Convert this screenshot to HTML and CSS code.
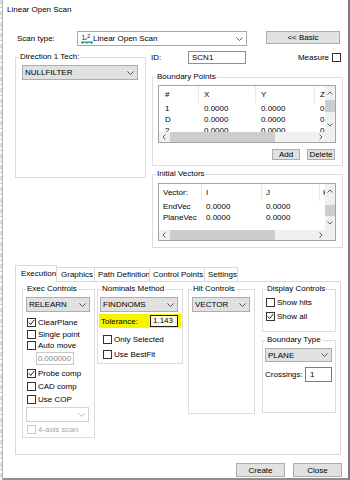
FILE: index.html
```html
<!DOCTYPE html>
<html>
<head>
<meta charset="utf-8">
<title>Linear Open Scan</title>
<link rel="stylesheet" href="styles.css">
</head>
<body>
<div class="window">
  <div class="strip"></div>
  <div class="dialog">
    <div class="title">Linear Open Scan</div>

    <div class="scan-row">
      <span class="lbl-scan">Scan type:</span>
      <div class="combo combo-edit">
        <svg class="scan-icon" width="12" height="13" viewBox="0 0 12 13">
          <text x="0.5" y="8" font-size="7" font-family="Liberation Sans, sans-serif" fill="#222">1</text>
          <text x="6" y="6" font-size="6" font-family="Liberation Sans, sans-serif" fill="#222">2</text>
          <rect x="4.5" y="6.5" width="1.2" height="1.2" fill="#222"/>
          <rect x="0" y="9.5" width="12" height="1.5" fill="#2a9d8f"/>
          <rect x="1" y="11" width="1" height="1" fill="#2a9d8f"/>
          <rect x="5.5" y="11" width="1" height="1" fill="#2a9d8f"/>
          <rect x="10" y="11" width="1" height="1" fill="#2a9d8f"/>
        </svg>
        <span class="combo-text">Linear Open Scan</span>
        <svg class="chev" width="7" height="4" viewBox="0 0 7 4"><polyline points="0.5,0.5 3.5,3.5 6.5,0.5" fill="none" stroke="#555" stroke-width="1"/></svg>
      </div>
      <div class="btn btn-basic">&lt;&lt; Basic</div>
    </div>

    <div class="main">
      <div class="left-col">
        <fieldset class="group g-dir">
          <legend>Direction 1 Tech:</legend>
          <div class="g-dir-body">
            <div class="combo combo-dir">
              <span class="combo-text">NULLFILTER</span>
              <svg class="chev" width="7" height="4" viewBox="0 0 7 4"><polyline points="0.5,0.5 3.5,3.5 6.5,0.5" fill="none" stroke="#555" stroke-width="1"/></svg>
            </div>
          </div>
        </fieldset>
      </div>

      <div class="right-col">
        <div class="id-row">
          <span class="lbl-id">ID:</span>
          <div class="input input-id">SCN1</div>
          <span class="measure">Measure</span>
          <span class="cb cb-measure"></span>
        </div>

        <fieldset class="group g-bp">
          <legend>Boundary Points</legend>
          <div class="g-bp-body">
            <div class="list">
              <div class="list-body">
                <div class="list-main">
                  <div class="lrow lhead">
                    <span class="c bc1">#</span><span class="c bc2">X</span><span class="c bc3">Y</span><span class="c bc4">Z</span>
                  </div>
                  <div class="lrow">
                    <span class="c bc1">1</span><span class="c bc2">0.0000</span><span class="c bc3">0.0000</span><span class="c bc4">0</span>
                  </div>
                  <div class="lrow">
                    <span class="c bc1">D</span><span class="c bc2">0.0000</span><span class="c bc3">0.0000</span><span class="c bc4">0</span>
                  </div>
                  <div class="lrow">
                    <span class="c bc1">2</span><span class="c bc2">0.0000</span><span class="c bc3">0.0000</span><span class="c bc4">0</span>
                  </div>
                </div>
                <div class="vscroll">
                  <div class="sbtn sbtn-v"><svg width="6" height="4" viewBox="0 0 6 4"><polyline points="0.5,3.5 3,1 5.5,3.5" fill="none" stroke="#606060"/></svg></div>
                  <div class="vtrack"><div class="vthumb vthumb-bp"></div></div>
                  <div class="sbtn sbtn-v"><svg width="6" height="4" viewBox="0 0 6 4"><polyline points="0.5,0.5 3,3 5.5,0.5" fill="none" stroke="#606060"/></svg></div>
                </div>
              </div>
              <div class="hscroll">
                <div class="sbtn sbtn-h"><svg width="4" height="6" viewBox="0 0 4 6"><polyline points="3.5,0.5 1,3 3.5,5.5" fill="none" stroke="#606060"/></svg></div>
                <div class="htrack"><div class="hthumb"></div></div>
                <div class="sbtn sbtn-h"><svg width="4" height="6" viewBox="0 0 4 6"><polyline points="0.5,0.5 3,3 0.5,5.5" fill="none" stroke="#606060"/></svg></div>
                <div class="corner"></div>
              </div>
            </div>
            <div class="bp-buttons">
              <div class="btn btn-small">Add</div>
              <div class="btn btn-small">Delete</div>
            </div>
          </div>
        </fieldset>

        <fieldset class="group g-iv">
          <legend>Initial Vectors</legend>
          <div class="g-iv-body">
            <div class="list">
              <div class="list-body">
                <div class="list-main">
                  <div class="lrow lhead">
                    <span class="c vc1">Vector:</span><span class="c vc2">I</span><span class="c vc3">J</span><span class="c vc4">K</span>
                  </div>
                  <div class="lrow">
                    <span class="c vc1">EndVec</span><span class="c vc2">0.0000</span><span class="c vc3">0.0000</span>
                  </div>
                  <div class="lrow">
                    <span class="c vc1">PlaneVec</span><span class="c vc2">0.0000</span><span class="c vc3">0.0000</span>
                  </div>
                </div>
                <div class="vscroll">
                  <div class="sbtn sbtn-v"><svg width="6" height="4" viewBox="0 0 6 4"><polyline points="0.5,3.5 3,1 5.5,3.5" fill="none" stroke="#606060"/></svg></div>
                  <div class="vtrack"><div class="vthumb vthumb-iv"></div></div>
                  <div class="sbtn sbtn-v"><svg width="6" height="4" viewBox="0 0 6 4"><polyline points="0.5,0.5 3,3 5.5,0.5" fill="none" stroke="#606060"/></svg></div>
                </div>
              </div>
              <div class="hscroll">
                <div class="sbtn sbtn-h"><svg width="4" height="6" viewBox="0 0 4 6"><polyline points="3.5,0.5 1,3 3.5,5.5" fill="none" stroke="#606060"/></svg></div>
                <div class="htrack"><div class="hthumb"></div></div>
                <div class="sbtn sbtn-h"><svg width="4" height="6" viewBox="0 0 4 6"><polyline points="0.5,0.5 3,3 0.5,5.5" fill="none" stroke="#606060"/></svg></div>
                <div class="corner"></div>
              </div>
            </div>
          </div>
        </fieldset>
      </div>
    </div>

    <div class="tabs">
      <div class="tabstrip">
        <div class="tab active t1">Execution</div>
        <div class="tab t2">Graphics</div>
        <div class="tab t3">Path Definition</div>
        <div class="tab t4">Control Points</div>
        <div class="tab t5">Settings</div>
      </div>
      <div class="pane">
        <fieldset class="group g-exec">
          <legend>Exec Controls</legend>
          <div class="g-exec-body">
            <div class="combo combo-exec">
              <span class="combo-text">RELEARN</span>
              <svg class="chev" width="7" height="4" viewBox="0 0 7 4"><polyline points="0.5,0.5 3.5,3.5 6.5,0.5" fill="none" stroke="#555" stroke-width="1"/></svg>
            </div>
            <div class="chk-row mt5"><span class="cb"><svg width="7" height="7" viewBox="0 0 7 7"><polyline points="0.8,3.4 2.7,5.5 6.2,1" fill="none" stroke="#222" stroke-width="1"/></svg></span><span>ClearPlane</span></div>
            <div class="chk-row mt1"><span class="cb"></span><span>Single point</span></div>
            <div class="chk-row"><span class="cb"></span><span>Auto move</span></div>
            <div class="input input-move">0.000000</div>
            <div class="chk-row mt3"><span class="cb"><svg width="7" height="7" viewBox="0 0 7 7"><polyline points="0.8,3.4 2.7,5.5 6.2,1" fill="none" stroke="#222" stroke-width="1"/></svg></span><span>Probe comp</span></div>
            <div class="chk-row mt2"><span class="cb"></span><span>CAD comp</span></div>
            <div class="chk-row mt2"><span class="cb"></span><span>Use COP</span></div>
            <div class="combo combo-dis mt2">
              <span class="combo-text"></span>
              <svg class="chev" width="7" height="4" viewBox="0 0 7 4"><polyline points="0.5,0.5 3.5,3.5 6.5,0.5" fill="none" stroke="#b8b8b8" stroke-width="1"/></svg>
            </div>
            <div class="chk-row mt2 dis"><span class="cb cb-dis"></span><span>4-axis scan</span></div>
          </div>
        </fieldset>

        <fieldset class="group g-nom">
          <legend>Nominals Method</legend>
          <div class="g-nom-body">
            <div class="combo combo-nom">
              <span class="combo-text">FINDNOMS</span>
              <svg class="chev" width="7" height="4" viewBox="0 0 7 4"><polyline points="0.5,0.5 3.5,3.5 6.5,0.5" fill="none" stroke="#555" stroke-width="1"/></svg>
            </div>
            <div class="tol-row">
              <span class="tol-label">Tolerance:</span>
              <div class="input input-tol">1.143</div>
            </div>
            <div class="chk-row nom-chk mt6"><span class="cb"></span><span>Only Selected</span></div>
            <div class="chk-row nom-chk mt4"><span class="cb"></span><span>Use BestFit</span></div>
          </div>
        </fieldset>

        <fieldset class="group g-hit">
          <legend>Hit Controls</legend>
          <div class="g-hit-body">
            <div class="combo combo-hit">
              <span class="combo-text">VECTOR</span>
              <svg class="chev" width="7" height="4" viewBox="0 0 7 4"><polyline points="0.5,0.5 3.5,3.5 6.5,0.5" fill="none" stroke="#555" stroke-width="1"/></svg>
            </div>
          </div>
        </fieldset>

        <div class="pane-right">
          <fieldset class="group g-disp">
            <legend>Display Controls</legend>
            <div class="g-disp-body">
              <div class="chk-row mt3"><span class="cb"></span><span>Show hits</span></div>
              <div class="chk-row mt3"><span class="cb"><svg width="7" height="7" viewBox="0 0 7 7"><polyline points="0.8,3.4 2.7,5.5 6.2,1" fill="none" stroke="#222" stroke-width="1"/></svg></span><span>Show all</span></div>
            </div>
          </fieldset>
          <fieldset class="group g-bt">
            <legend>Boundary Type</legend>
            <div class="g-bt-body">
              <div class="combo combo-bt">
                <span class="combo-text">PLANE</span>
                <svg class="chev" width="7" height="4" viewBox="0 0 7 4"><polyline points="0.5,0.5 3.5,3.5 6.5,0.5" fill="none" stroke="#555" stroke-width="1"/></svg>
              </div>
              <div class="cross-row">
                <span class="cross-label">Crossings:</span>
                <div class="input input-cross">1</div>
              </div>
            </div>
          </fieldset>
        </div>
      </div>
    </div>

    <div class="footer">
      <div class="btn btn-foot">Create</div>
      <div class="btn btn-foot">Close</div>
    </div>
  </div>
</div>
</body>
</html>
```

FILE: styles.css
```css
* { box-sizing: border-box; }

html, body {
  margin: 0;
  padding: 0;
  background: #ffffff;
}

body {
  font-family: "Liberation Sans", Arial, sans-serif;
  font-size: 8px;
  color: #000000;
  width: 350px;
  height: 480px;
  overflow: hidden;
}

.window {
  display: flex;
  width: 350px;
  height: 480px;
}

.strip {
  width: 3px;
  flex: none;
  border-right: 1px solid #b4b4b4;
  background: repeating-linear-gradient(to bottom, #d5dcea 0 3px, #eec8c8 3px 4px, #f4f4f4 4px 7px, #c4cde0 7px 8px, #ffffff 8px 11px);
}

.dialog {
  width: 347px;
  height: 480px;
  flex: none;
  border-right: 2px solid #7b7b7b;
  border-bottom: 2px solid #8e8e8e;
  background: #ffffff;
}

.title {
  height: 20px;
  line-height: 20px;
  padding-left: 4px;
  font-size: 8px;
}

/* ---------- scan type row ---------- */
.scan-row {
  display: flex;
  align-items: flex-start;
  margin-top: 11px;
  height: 15px;
  padding-left: 14px;
}

.lbl-scan {
  width: 60px;
  line-height: 15px;
  flex: none;
}

.combo {
  display: flex;
  align-items: center;
  height: 15px;
  background: #e1e1e1;
  border: 1px solid #adadad;
  padding-left: 2px;
  flex: none;
}

.combo-text {
  flex: 1;
  white-space: nowrap;
  overflow: hidden;
}

.chev {
  flex: none;
  margin-right: 3px;
}

.combo-edit {
  width: 170px;
  background: #ffffff;
  border-color: #a8a8a8;
  padding-left: 3px;
}

.scan-icon {
  flex: none;
  margin-right: 0;
}

.btn {
  display: flex;
  align-items: center;
  justify-content: center;
  background: #e1e1e1;
  border: 1px solid #adadad;
  flex: none;
  white-space: nowrap;
}

.btn-basic {
  margin-left: 19px;
  width: 74px;
  height: 13px;
}

/* ---------- main area ---------- */
.main {
  display: flex;
  align-items: flex-start;
  margin-top: 5px;
  padding-left: 12px;
}

.left-col {
  width: 131px;
  flex: none;
}

.right-col {
  width: 192px;
  flex: none;
  margin-left: 5px;
}

.group {
  margin: 0;
  padding: 0;
  border: 1px solid #dcdcdc;
  min-inline-size: 0;
}

.group legend {
  margin-left: 3px;
  padding: 0 1px;
  height: 10px;
  line-height: 10px;
  font-size: 8px;
  white-space: nowrap;
}

.g-dir {
  width: 131px;
  margin-top: 1px;
}

.g-dir-body {
  height: 115px;
  padding: 3px 0 0 6px;
}

.combo-dir {
  width: 116px;
}

.id-row {
  display: flex;
  align-items: center;
  height: 13px;
}

.lbl-id {
  width: 37px;
  flex: none;
}

.input {
  background: #ffffff;
  border: 1px solid #8f8f8f;
  flex: none;
  white-space: nowrap;
  overflow: hidden;
}

.input-id {
  width: 58px;
  height: 13px;
  line-height: 11px;
  padding-left: 3px;
}

.measure {
  margin-left: auto;
}

.cb {
  width: 9px;
  height: 9px;
  border: 1px solid #333333;
  background: #ffffff;
  display: inline-flex;
  flex: none;
}

.cb-measure {
  margin-left: 3px;
  margin-right: 2px;
}

.g-bp {
  width: 191px;
  margin-top: 8px;
  margin-left: 1px;
}

.g-bp-body {
  padding: 3px 0 5px 5px;
}

.g-iv {
  width: 191px;
  margin-top: 3px;
  margin-left: 1px;
}

.g-iv-body {
  padding: 4px 0 6px 5px;
}

/* ---------- list views ---------- */
.list {
  width: 178px;
  height: 58px;
  border: 1px solid #a3a3a3;
  background: #ffffff;
  display: flex;
  flex-direction: column;
}

.list-body {
  display: flex;
  height: 46px;
}

.list-main {
  flex: 1;
  overflow: hidden;
}

.lrow {
  display: flex;
  height: 11px;
  line-height: 11px;
  white-space: nowrap;
}

.lrow.lhead {
  height: 17px;
  line-height: 17px;
}

.c {
  flex: none;
  padding-left: 5px;
  overflow: hidden;
}

.lhead .c {
  border-right: 1px solid #e8e8e8;
}

.bc1 { width: 40px; padding-left: 6px; }
.bc2 { width: 57px; }
.bc3 { width: 59px; }
.bc4 { width: 30px; }

.vc1 { width: 43px; padding-left: 4px; }
.vc2 { width: 60px; padding-left: 4px; }
.vc3 { width: 58px; padding-left: 4px; }
.vc4 { width: 30px; padding-left: 3px; }

.vscroll {
  width: 10px;
  flex: none;
  display: flex;
  flex-direction: column;
  background: #f0f0f0;
}

.sbtn {
  display: flex;
  align-items: center;
  justify-content: center;
  flex: none;
}

.sbtn-v {
  height: 14px;
}

.vtrack {
  height: 18px;
  flex: none;
}

.vthumb {
  width: 10px;
  background: #cdcdcd;
}

.vthumb-bp {
  height: 12px;
  margin-top: 0;
}

.vthumb-iv {
  height: 11px;
  margin-top: 7px;
}

.hscroll {
  display: flex;
  height: 10px;
  background: #f0f0f0;
}

.sbtn-h {
  width: 9px;
}

.htrack {
  flex: 1;
  display: flex;
  align-items: stretch;
}

.hthumb {
  width: 105px;
  margin-left: 2px;
  background: #cdcdcd;
}

.corner {
  width: 10px;
  flex: none;
  background: #f0f0f0;
}

.bp-buttons {
  display: flex;
  justify-content: flex-end;
  gap: 7px;
  margin-top: 6px;
  padding-right: 7px;
}

.btn-small {
  width: 28px;
  height: 11px;
}

/* ---------- tabs ---------- */
.tabs {
  margin-top: 17px;
  margin-left: 12px;
  width: 326px;
}

.tabstrip {
  display: flex;
  align-items: flex-end;
  height: 16px;
}

.tab {
  height: 14px;
  line-height: 13px;
  border: 1px solid #d9d9d9;
  border-bottom: none;
  background: #ffffff;
  padding-left: 3px;
  white-space: nowrap;
  overflow: hidden;
  margin-left: -1px;
  flex: none;
}

.tab.active {
  height: 17px;
  line-height: 16px;
  margin-left: 0;
  margin-bottom: -1px;
  padding-left: 5px;
  position: relative;
}

.t1 { width: 42px; }
.t2 { width: 39px; padding-left: 4px; }
.t3 { width: 56px; }
.t4 { width: 56px; }
.t5 { width: 34px; }

.pane {
  height: 174px;
  border: 1px solid #d9d9d9;
  display: flex;
  align-items: flex-start;
  padding: 2px 0 0 6px;
}

.g-exec {
  width: 73px;
  flex: none;
}

.g-exec-body {
  padding: 3px 0 2px 3px;
}

.combo-exec {
  width: 64px;
}

.chk-row {
  display: flex;
  align-items: center;
  height: 11px;
  white-space: nowrap;
}

.chk-row .cb {
  margin-left: 1px;
  margin-right: 2px;
}

.mt1 { margin-top: 1px; }
.mt2 { margin-top: 2px; }
.mt3 { margin-top: 3px; }
.mt4 { margin-top: 4px; }
.mt5 { margin-top: 5px; }
.mt6 { margin-top: 6px; }

.input-move {
  width: 38px;
  height: 13px;
  line-height: 11px;
  margin-top: 1px;
  margin-left: 10px;
  text-align: right;
  padding-right: 2px;
  color: #8a8a8a;
  border-color: #c8c8c8;
}

.combo-dis {
  width: 63px;
  background: #ffffff;
  border-color: #d2d2d2;
}

.dis {
  color: #a6a6a6;
}

.cb-dis {
  border-color: #cacaca;
}

.g-nom {
  width: 86px;
  flex: none;
  margin-left: 2px;
}

.g-nom-body {
  padding: 3px 0 3px 2px;
}

.combo-nom {
  width: 78px;
}

.tol-row {
  display: flex;
  align-items: center;
  width: 82px;
  height: 14px;
  margin-top: 2px;
  margin-left: -1px;
  background: #f5f500;
}

.tol-label {
  width: 51px;
  padding-left: 2px;
  flex: none;
}

.input-tol {
  width: 28px;
  height: 12px;
  line-height: 10px;
  border-color: #1e1e1e;
  padding-left: 2px;
  background: #fbfbe8;
}

.nom-chk .cb {
  margin-left: 3px;
}

.g-hit {
  width: 67px;
  flex: none;
  margin-left: 5px;
}

.g-hit-body {
  height: 119px;
  padding: 3px 0 0 3px;
}

.combo-hit {
  width: 58px;
}

.pane-right {
  width: 74px;
  flex: none;
  margin-left: 7px;
}

.g-disp {
  width: 74px;
}

.g-disp-body {
  padding: 0 0 9px 2px;
}

.g-bt {
  width: 74px;
  margin-top: 3px;
}

.g-bt-body {
  padding: 3px 0 30px 2px;
}

.combo-bt {
  width: 67px;
  height: 14px;
}

.cross-row {
  display: flex;
  align-items: center;
  margin-top: 5px;
  height: 15px;
}

.cross-label {
  width: 40px;
  flex: none;
}

.input-cross {
  width: 27px;
  height: 15px;
  line-height: 13px;
  padding-left: 4px;
  border-color: #7a7a7a;
}

/* ---------- footer ---------- */
.footer {
  display: flex;
  justify-content: flex-end;
  gap: 8px;
  margin-top: 8px;
  padding-right: 6px;
}

.btn-foot {
  width: 49px;
  height: 14px;
}
```
